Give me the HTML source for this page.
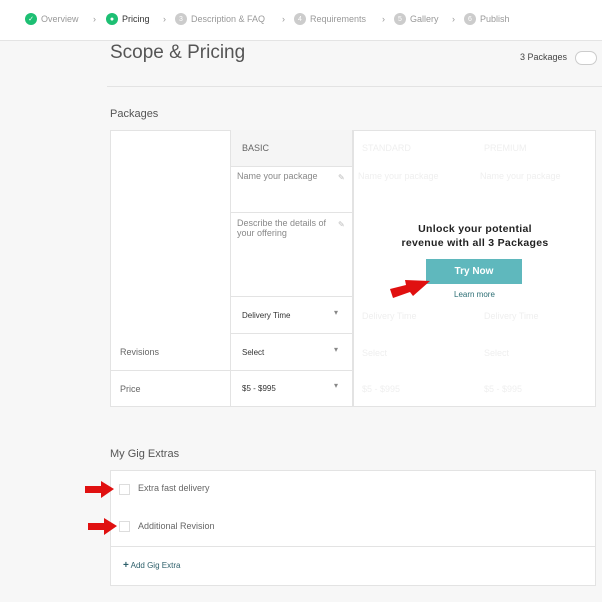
<html><head><style>
body{margin:0;width:602px;height:602px;background:#f7f7f7;font-family:"Liberation Sans",sans-serif;position:relative;overflow:hidden}
.a{position:absolute}
.hdr{left:0;top:0;width:602px;height:40px;background:#fff;border-bottom:1px solid #e4e4e4}
.st{top:13px;font-size:9px;color:#999;display:flex;align-items:center}
.c{width:12px;height:12px;border-radius:50%;background:#ccc;color:#fff;font-size:7px;display:inline-flex;align-items:center;justify-content:center;margin-right:4px}
.sep{color:#999;font-size:9px}
.cell{font-size:9px;color:#555}
.line{background:#e3e3e3}
.ghost{color:#efefef;font-size:9px}
.dd{font-size:8px;color:#888}
</style></head><body>
<div class="a hdr"></div>
<div class="a st" style="left:25px"><span class="c" style="background:#1dbf73">✓</span>Overview</div>
<span class="a sep" style="left:93px;top:14px">›</span>
<div class="a st" style="left:106px;color:#333"><span class="c" style="background:#1dbf73">●</span>Pricing</div>
<span class="a sep" style="left:163px;top:14px">›</span>
<div class="a st" style="left:175px"><span class="c">3</span>Description &amp; FAQ</div>
<span class="a sep" style="left:282px;top:14px">›</span>
<div class="a st" style="left:294px"><span class="c">4</span>Requirements</div>
<span class="a sep" style="left:382px;top:14px">›</span>
<div class="a st" style="left:394px"><span class="c">5</span>Gallery</div>
<span class="a sep" style="left:452px;top:14px">›</span>
<div class="a st" style="left:464px"><span class="c">6</span>Publish</div>

<div class="a" style="left:110px;top:42px;font-size:19px;color:#555">Scope &amp; Pricing</div>
<div class="a" style="left:520px;top:52px;font-size:9px;color:#444">3 Packages</div>
<div class="a" style="left:575px;top:51px;width:20px;height:12px;border:1px solid #ccc;border-radius:7px;background:#fff"></div>
<div class="a" style="left:107px;top:86px;width:495px;height:1px;background:#e3e3e3"></div>
<div class="a" style="left:110px;top:108px;font-size:11px;color:#555">Packages</div>

<!-- table -->
<div class="a" style="left:110px;top:130px;width:486px;height:277px;background:#fff;border:1px solid #e3e3e3;box-sizing:border-box"></div>
<div class="a" style="left:231px;top:130px;width:122px;height:36px;background:#f5f5f5"></div>
<div class="a line" style="left:230px;top:130px;width:1px;height:277px"></div>
<div class="a line" style="left:352px;top:130px;width:2px;height:277px"></div>
<div class="a line" style="left:231px;top:166px;width:121px;height:1px"></div>
<div class="a line" style="left:231px;top:212px;width:121px;height:1px"></div>
<div class="a line" style="left:231px;top:296px;width:121px;height:1px"></div>
<div class="a line" style="left:231px;top:333px;width:121px;height:1px"></div>
<div class="a line" style="left:110px;top:370px;width:242px;height:1px"></div>
<div class="a cell" style="left:242px;top:143px;color:#666">BASIC</div>
<div class="a cell" style="left:237px;top:171px;color:#888">Name your package</div>
<div class="a cell" style="left:237px;top:218px;color:#888;width:100px;line-height:10px">Describe the details of your offering</div>
<div class="a" style="left:338px;top:173px;font-size:8px;color:#bbb">✎</div>
<div class="a" style="left:338px;top:220px;font-size:8px;color:#bbb">✎</div>
<div class="a cell" style="left:242px;top:311px;color:#333;font-size:8px">Delivery Time</div>
<div class="a cell" style="left:242px;top:348px;color:#333;font-size:8px">Select</div>
<div class="a cell" style="left:242px;top:384px;color:#333;font-size:8px">$5 - $995</div>
<div class="a dd" style="left:334px;top:308px">▾</div>
<div class="a dd" style="left:334px;top:345px">▾</div>
<div class="a dd" style="left:334px;top:381px">▾</div>
<div class="a cell" style="left:120px;top:347px;color:#666">Revisions</div>
<div class="a cell" style="left:120px;top:384px;color:#666">Price</div>
<div class="a ghost" style="left:362px;top:143px">STANDARD</div>
<div class="a ghost" style="left:484px;top:143px">PREMIUM</div>
<div class="a ghost" style="left:358px;top:171px">Name your package</div>
<div class="a ghost" style="left:480px;top:171px">Name your package</div>
<div class="a ghost" style="left:362px;top:311px">Delivery Time</div>
<div class="a ghost" style="left:484px;top:311px">Delivery Time</div>
<div class="a ghost" style="left:362px;top:348px">Select</div>
<div class="a ghost" style="left:484px;top:348px">Select</div>
<div class="a ghost" style="left:362px;top:384px">$5 - $995</div>
<div class="a ghost" style="left:484px;top:384px">$5 - $995</div>
<div class="a" style="left:360px;top:222px;width:230px;text-align:center;font-size:10.5px;font-weight:bold;color:#222;line-height:14px;letter-spacing:0.3px">Unlock your potential<br>revenue with all 3 Packages</div>
<div class="a" style="left:426px;top:259px;width:96px;height:25px;background:#5fb8bd;color:#fff;font-size:10px;font-weight:bold;text-align:center;line-height:25px">Try Now</div>
<div class="a" style="left:454px;top:290px;font-size:8px;color:#2d6f75">Learn more</div>
<svg class="a" style="left:388px;top:276px" width="45" height="24"><polygon points="2,13 18,9 17,4 42,5 25,20 22,16 5,22" fill="#e01010"/></svg>

<div class="a" style="left:110px;top:448px;font-size:11px;color:#555">My Gig Extras</div>
<div class="a" style="left:110px;top:470px;width:486px;height:116px;background:#fff;border:1px solid #e3e3e3;box-sizing:border-box"></div>
<div class="a line" style="left:110px;top:546px;width:486px;height:1px"></div>
<div class="a" style="left:119px;top:484px;width:9px;height:9px;border:1px solid #ddd"></div>
<div class="a" style="left:119px;top:521px;width:9px;height:9px;border:1px solid #ddd"></div>
<div class="a cell" style="left:138px;top:483px;color:#666">Extra fast delivery</div>
<div class="a cell" style="left:138px;top:521px;color:#666">Additional Revision</div>
<div class="a" style="left:123px;top:560px;font-size:8px;color:#2d5f6a"><b style="font-size:10px">+</b> Add Gig Extra</div>
<svg class="a" style="left:85px;top:481px" width="30" height="18"><polygon points="0,5 16,5 16,0 29,8 16,17 16,12 0,12" fill="#e01010"/></svg>
<svg class="a" style="left:88px;top:518px" width="30" height="18"><polygon points="0,5 16,5 16,0 29,8 16,17 16,12 0,12" fill="#e01010"/></svg>
</body></html>
